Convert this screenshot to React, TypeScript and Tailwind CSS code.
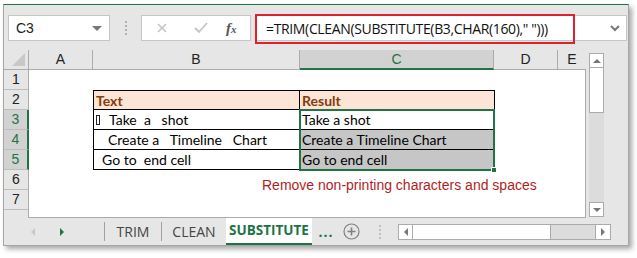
import React from "react";

const cellFont = { fontFamily: "Lato, 'Liberation Sans', sans-serif" };

function RowHeader({ n, sel }: { n: string; sel?: boolean }) {
  return (
    <div
      className={`h-[20px] flex items-center justify-center text-[14px] border-b border-[#bdbdbd] ${
        sel ? "bg-[#d2d2d2] text-[#217346] border-r-2 border-r-[#217346]" : "bg-[#e6e6e6] text-[#222] border-r border-r-[#ababab]"
      }`}
    >
      {n}
    </div>
  );
}

export default function App() {
  return (
    <div className="w-[637px] h-[258px] bg-white relative overflow-hidden" style={{ fontFamily: "'Liberation Sans', Arial, sans-serif" }}>
      <div className="absolute left-[3px] top-[4px] w-[626px] h-[242px] bg-[#e6e6e6] border border-[#a6a6a6] border-t-[#217346] shadow-[3px_3px_5px_rgba(0,0,0,0.35)] flex flex-col">
        {/* formula bar */}
        <div className="h-[45px] flex items-start pt-[10px] relative">
          <div className="ml-[4px] w-[102px] h-[26px] bg-white border border-[#c6c6c6] flex items-center pl-[7px] text-[14px] text-[#222]">
            <span className="flex-1">C3</span>
            <span className="mr-[7px] w-0 h-0 border-l-[5px] border-r-[5px] border-t-[5px] border-l-transparent border-r-transparent border-t-[#777]" />
          </div>
          <div className="w-[31px] h-[26px] flex flex-col items-center justify-center gap-[2px]">
            <span className="w-[2px] h-[2px] bg-[#b0b0b0]" />
            <span className="w-[2px] h-[2px] bg-[#b0b0b0]" />
            <span className="w-[2px] h-[2px] bg-[#b0b0b0]" />
            <span className="w-[2px] h-[2px] bg-[#b0b0b0]" />
          </div>
          <div className="w-[110px] h-[26px] bg-white border border-[#c6c6c6] flex items-center">
            <svg width="36" height="24" viewBox="0 0 36 24" className="ml-[2px]">
              <path d="M14 8 L22 16 M22 8 L14 16" stroke="#c4c4c4" strokeWidth="1.6" />
            </svg>
            <svg width="36" height="24" viewBox="0 0 36 24" className="ml-[2px]">
              <path d="M13 12 L17 16 L25 7" stroke="#c4c4c4" strokeWidth="1.8" fill="none" />
            </svg>
            <span className="ml-[8px] text-[15px] italic font-bold text-[#555]" style={{ fontFamily: "'Liberation Serif', serif" }}>
              f<span className="text-[11px]">x</span>
            </span>
          </div>
          <div className="ml-[5px] w-[371px] h-[26px] bg-white border border-[#c6c6c6] flex items-center pl-[9px] text-[14px] text-[#111] whitespace-pre" style={{ fontFamily: "'Open Sans', sans-serif", letterSpacing: "-0.35px" }}>
            <span className="flex-1">=TRIM(CLEAN(SUBSTITUTE(B3,CHAR(160)," ")))</span>
            <svg width="12" height="10" viewBox="0 0 12 10" className="mr-[5px]">
              <path d="M2 3 L6 7 L10 3" stroke="#777" strokeWidth="2" fill="none" />
            </svg>
          </div>
          <div className="absolute left-[251px] top-[9px] w-[320px] h-[30px] border-2 border-[#e0202a]" />
        </div>

        {/* sheet + vscroll */}
        <div className="flex h-[168px]">
          <div className="w-[582px] flex flex-col">
            {/* column headers */}
            <div className="flex h-[20px] text-[14px] text-[#222]">
              <div className="w-[25px] bg-[#e6e6e6] border-r border-b border-[#ababab] flex items-end justify-end pr-[3px] pb-[3px]">
                <svg width="13" height="13" viewBox="0 0 13 13">
                  <path d="M13 0 L13 13 L0 13 Z" fill="#c8c8c8" />
                </svg>
              </div>
              <div className="w-[64px] flex items-center justify-center border-r border-b border-[#ababab] bg-[#e6e6e6]">A</div>
              <div className="w-[207px] flex items-center justify-center border-r border-b border-[#ababab] bg-[#e6e6e6]">B</div>
              <div className="w-[194px] flex items-center justify-center border-r border-[#ababab] border-b-2 border-b-[#217346] bg-[#d2d2d2] text-[#217346]">C</div>
              <div className="w-[64px] flex items-center justify-center border-r border-b border-[#ababab] bg-[#e6e6e6]">D</div>
              <div className="flex-1 flex items-center justify-center border-b border-[#ababab] bg-[#e6e6e6]">E</div>
            </div>
            <div className="flex flex-1">
              <div className="w-[25px] flex flex-col">
                <RowHeader n="1" />
                <RowHeader n="2" />
                <RowHeader n="3" sel />
                <RowHeader n="4" sel />
                <RowHeader n="5" sel />
                <RowHeader n="6" />
                <RowHeader n="7" />
                <div className="flex-1 bg-[#e6e6e6] border-r border-[#ababab]" />
              </div>
              <div className="flex-1 bg-white border-r border-b border-[#ababab] flex flex-col relative" style={cellFont}>
                <div className="h-[20px]" />
                {/* table */}
                <div className="ml-[64px] flex flex-col w-[402px] text-[14px] text-black">
                  <div className="flex h-[20px] bg-[#fce4d6] border border-black font-bold text-[#843c0c]">
                    <div className="w-[206px] border-r border-black pl-[2px] leading-[19px]">Text</div>
                    <div className="flex-1 pl-[2px] leading-[19px]">Result</div>
                  </div>
                  <div className="flex h-[20px] border-x border-b border-black">
                    <div className="w-[206px] border-r border-black pl-[2px] leading-[19px] whitespace-pre flex items-center">
                      <span className="inline-block w-[4px] h-[10px] border border-[#222] mr-[9px]" />
                      <span>Take  a   shot</span>
                    </div>
                    <div className="flex-1 pl-[2px] leading-[19px]">Take a shot</div>
                  </div>
                  <div className="flex h-[20px] border-x border-b border-black">
                    <div className="w-[206px] border-r border-black pl-[14px] leading-[19px] whitespace-pre">Create a   Timeline   Chart</div>
                    <div className="flex-1 pl-[2px] leading-[19px] bg-[#c6c6c6]">Create a Timeline Chart</div>
                  </div>
                  <div className="flex h-[20px] border-x border-b border-black">
                    <div className="w-[206px] border-r border-black pl-[8px] leading-[19px] whitespace-pre">Go to  end cell</div>
                    <div className="flex-1 pl-[2px] leading-[19px] bg-[#c6c6c6]">Go to end cell</div>
                  </div>
                </div>
                {/* selection box */}
                <div className="absolute left-[270px] top-[39px] w-[196px] h-[62px] border-2 border-[#217346] pointer-events-none" />
                <div className="absolute left-[462px] top-[97px] w-[6px] h-[6px] bg-[#217346] border border-white" />
                <div className="ml-[233px] mt-[5px] text-[14px] text-[#b01e1e] whitespace-nowrap" style={{ fontFamily: "'Liberation Sans', Arial, sans-serif" }}>
                  Remove non-printing characters and spaces
                </div>
              </div>
            </div>
          </div>
          {/* vertical scrollbar */}
          <div className="flex-1 pl-[3px] pt-[3px] pb-[1px] flex flex-col">
            <div className="w-[15px] flex-1 bg-[#dcdcdc] flex flex-col">
              <div className="h-[15px] bg-white border border-[#ababab] flex items-center justify-center">
                <span className="w-0 h-0 border-l-[4px] border-r-[4px] border-b-[4px] border-l-transparent border-r-transparent border-b-[#777]" />
              </div>
              <div className="h-[45px] bg-white border-x border-b border-[#ababab]" />
              <div className="flex-1" />
              <div className="h-[15px] bg-white border border-[#ababab] flex items-center justify-center">
                <span className="w-0 h-0 border-l-[4px] border-r-[4px] border-t-[4px] border-l-transparent border-r-transparent border-t-[#777]" />
              </div>
            </div>
          </div>
        </div>

        {/* tab bar */}
        <div className="flex-1 flex items-stretch text-[14px] text-[#444]" style={{ fontFamily: "'Open Sans', sans-serif" }}>
          <div className="w-[100px] flex items-center">
            <span className="ml-[27px] w-0 h-0 border-t-[4px] border-b-[4px] border-r-[4px] border-t-transparent border-b-transparent border-r-[#c8c8c8]" />
            <span className="ml-[25px] w-0 h-0 border-t-[4px] border-b-[4px] border-l-[4px] border-t-transparent border-b-transparent border-l-[#217346]" />
          </div>
          <div className="w-px my-[4px] bg-[#a0a0a0]" />
          <div className="w-[56px] flex items-center justify-center">TRIM</div>
          <div className="w-px my-[4px] bg-[#a0a0a0]" />
          <div className="w-[64px] flex items-center justify-center">CLEAN</div>
          <div className="w-[86px] bg-white border-b-2 border-[#217346] flex items-center justify-center font-bold text-[#217346] text-[13.5px] overflow-hidden whitespace-nowrap">
            SUBSTITUTE
          </div>
          <div className="w-[28px] flex items-center justify-center font-bold text-[#217346] tracking-[1px]">...</div>
          <div className="w-[22px] flex items-center justify-center">
            <svg width="17" height="17" viewBox="0 0 17 17">
              <circle cx="8.5" cy="8.5" r="7.5" stroke="#808080" strokeWidth="1.2" fill="none" />
              <path d="M8.5 4.5 V12.5 M4.5 8.5 H12.5" stroke="#808080" strokeWidth="1.6" />
            </svg>
          </div>
          <div className="w-[36px] flex flex-col items-center justify-center gap-[2px]">
            <span className="w-[2px] h-[2px] bg-[#c0c0c0]" />
            <span className="w-[2px] h-[2px] bg-[#c0c0c0]" />
            <span className="w-[2px] h-[2px] bg-[#c0c0c0]" />
            <span className="w-[2px] h-[2px] bg-[#c0c0c0]" />
          </div>
          <div className="flex items-center">
            <div className="w-[213px] h-[16px] border border-[#ababab] bg-[#dcdcdc] flex">
              <div className="w-[14px] bg-white border-r border-[#ababab] flex items-center justify-center">
                <span className="w-0 h-0 border-t-[4px] border-b-[4px] border-r-[4px] border-t-transparent border-b-transparent border-r-[#777]" />
              </div>
              <div className="w-[138px] bg-white border-r border-[#ababab]" />
              <div className="flex-1" />
              <div className="w-[15px] bg-white border-l border-[#ababab] flex items-center justify-center">
                <span className="w-0 h-0 border-t-[4px] border-b-[4px] border-l-[4px] border-t-transparent border-b-transparent border-l-[#777]" />
              </div>
            </div>
          </div>
        </div>
      </div>
    </div>
  );
}
